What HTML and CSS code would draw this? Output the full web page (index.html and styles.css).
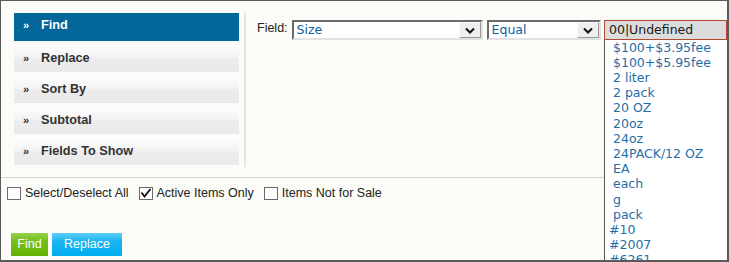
FILE: index.html
```html
<!DOCTYPE html>
<html>
<head>
<meta charset="utf-8">
<link rel="stylesheet" href="styles.css">
</head>
<body>
<div class="frame">
  <div class="top">
    <nav class="nav">
      <div class="nav-item active"><span class="arrows">»</span>Find</div>
      <div class="nav-item"><span class="arrows">»</span>Replace</div>
      <div class="nav-item"><span class="arrows">»</span>Sort By</div>
      <div class="nav-item"><span class="arrows">»</span>Subtotal</div>
      <div class="nav-item"><span class="arrows">»</span>Fields To Show</div>
    </nav>
    <div class="sep"></div>
    <div class="main">
      <span class="label">Field:</span>
      <div class="select select-1">
        <span class="select-value">Size</span>
        <span class="select-btn"><svg width="10" height="7" viewBox="0 0 10 7"><polyline points="1,1.5 5,5.5 9,1.5" fill="none" stroke="#111" stroke-width="2"/></svg></span>
      </div>
      <div class="select select-2">
        <span class="select-value">Equal</span>
        <span class="select-btn"><svg width="10" height="7" viewBox="0 0 10 7"><polyline points="1,1.5 5,5.5 9,1.5" fill="none" stroke="#111" stroke-width="2"/></svg></span>
      </div>
    </div>
  </div>
  <div class="rule"></div>
  <div class="checks">
    <label class="check"><span class="box"></span>Select/Deselect All</label>
    <label class="check"><span class="box"><svg width="12" height="11" viewBox="0 0 12 11"><polyline points="1.5,4.5 4.5,8.5 10.5,1" fill="none" stroke="#111" stroke-width="1.8"/></svg></span>Active Items Only</label>
    <label class="check"><span class="box"></span>Items Not for Sale</label>
  </div>
  <div class="buttons">
    <button class="btn btn-find">Find</button>
    <button class="btn btn-replace">Replace</button>
  </div>
  <div class="dropdown">
    <div class="opt-selected">00|Undefined</div>
    <div class="opts">
      <div class="opt ind">$100+$3.95fee</div>
      <div class="opt ind">$100+$5.95fee</div>
      <div class="opt ind">2 liter</div>
      <div class="opt ind">2 pack</div>
      <div class="opt ind">20 OZ</div>
      <div class="opt ind">20oz</div>
      <div class="opt ind">24oz</div>
      <div class="opt ind">24PACK/12 OZ</div>
      <div class="opt ind">EA</div>
      <div class="opt ind">each</div>
      <div class="opt ind">g</div>
      <div class="opt ind">pack</div>
      <div class="opt">#10</div>
      <div class="opt">#2007</div>
      <div class="opt">#6261</div>
    </div>
  </div>
</div>
</body>
</html>
```
FILE: styles.css
```css
* { box-sizing: border-box; }
body { margin: 0; background: #fff; }

.frame {
  position: relative;
  width: 729px;
  height: 262px;
  border-style: solid;
  border-color: #5a5a5a;
  border-width: 1px 2px 2px 1px;
  background: #fbfcf7;
  overflow: hidden;
  font-family: "Liberation Sans", Arial, sans-serif;
  font-size: 12.5px;
  color: #222;
}

.top {
  display: flex;
  height: 176px;
  padding: 11px 0 0 13px;
}

.nav {
  width: 225px;
  margin-top: 1px;
  display: flex;
  flex-direction: column;
  gap: 3px;
}

.nav-item {
  height: 28px;
  line-height: 28px;
  padding-left: 9px;
  font-weight: bold;
  font-size: 12.7px;
  color: #333;
  background: linear-gradient(#fdfdfd, #f4f4f4 45%, #ececec 55%, #eaeaea);
  white-space: nowrap;
}

.nav-item.active {
  background: #03679a;
  color: #fff;
  line-height: 25px;
  padding-bottom: 3px;
}

.arrows {
  display: inline-block;
  width: 18px;
  font-size: 11px;
}

.sep {
  width: 2px;
  height: 155px;
  margin-left: 5px;
  background: #e6e6e6;
}

.main {
  display: flex;
  align-items: flex-start;
  margin-left: 11px;
  margin-top: 8px;
  height: 20px;
}

.label {
  line-height: 16px;
  margin-right: 4px;
}

.select {
  display: flex;
  height: 20px;
  border-style: solid;
  border-width: 2px;
  border-color: #6b6b6b #e2e2e2 #e2e2e2 #6b6b6b;
  background: #fff;
  margin-right: 4px;
}

.select-1 { width: 191px; }
.select-2 { width: 114px; }

.select-value {
  flex: 1;
  padding-left: 3px;
  font-family: "DejaVu Sans", Verdana, sans-serif;
  font-size: 12.5px;
  line-height: 16px;
  color: #0b5fa0;
}

.select-btn {
  width: 22px;
  height: 16px;
  background: #efefef;
  border: 1px solid;
  border-color: #fafafa #9a9a9a #9a9a9a #fafafa;
  display: flex;
  align-items: center;
  justify-content: center;
}

.rule {
  height: 1px;
  background: #d4d4d4;
}

.checks {
  display: flex;
  align-items: center;
  height: 14px;
  margin-top: 8px;
  padding-left: 6px;
}

.check {
  display: flex;
  align-items: center;
  margin-right: 10px;
}

.box {
  width: 14px;
  height: 13px;
  border: 1px solid #6a6a6a;
  background: #fff;
  margin-right: 4px;
  display: flex;
  align-items: center;
  justify-content: center;
}

.buttons {
  display: flex;
  gap: 4px;
  margin-top: 33px;
  padding-left: 10px;
}

.btn {
  height: 23px;
  line-height: 23px;
  color: #fff;
  font-family: "Liberation Sans", Arial, sans-serif;
  font-size: 12.5px;
  text-align: center;
  border: none;
  padding: 0;
}

.btn-find {
  width: 37px;
  background: linear-gradient(#95d24f, #78c020 30%, #66b000);
}

.btn-replace {
  width: 70px;
  background: linear-gradient(#5ed0fa, #1cb5f0 35%, #00aeef);
}

.dropdown {
  position: absolute;
  left: 603px;
  top: 19px;
  width: 123px;
  font-family: "DejaVu Sans", Verdana, sans-serif;
  font-size: 12.5px;
  color: #1f6ea8;
}

.opt-selected {
  height: 19.5px;
  line-height: 17.5px;
  border: 1px solid #b34a30;
  background: #dcdcdc;
  color: #1a1a1a;
  padding-left: 4px;
}

.opts {
  background: #fff;
  border-left: 1px solid #555;
}

.opt {
  line-height: 15.2px;
  padding-left: 4px;
  white-space: nowrap;
}

.opt.ind { padding-left: 8px; }
```
